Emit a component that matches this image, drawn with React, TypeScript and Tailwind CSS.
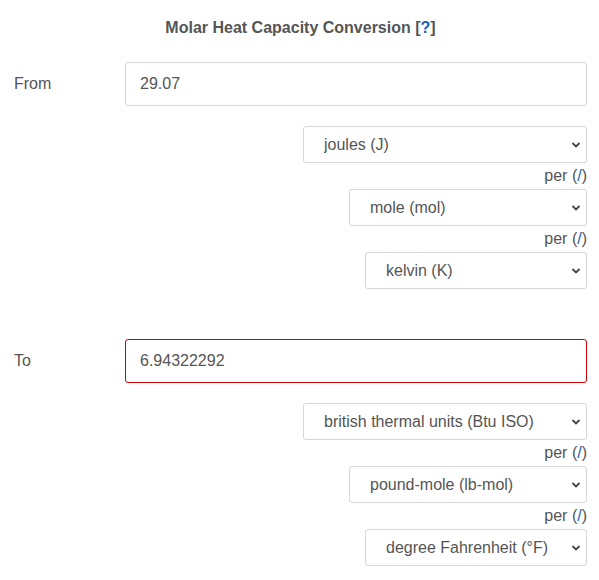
import { useState } from "react";

type UnitRow = { value: string; width: string };

function Chevron() {
  return (
    <svg
      width="10"
      height="6"
      viewBox="0 0 10 6"
      className="pointer-events-none absolute right-[6px] top-1/2 -translate-y-1/2"
    >
      <polyline
        points="1.5,1 5,4.5 8.5,1"
        fill="none"
        stroke="#444"
        strokeWidth="1.8"
      />
    </svg>
  );
}

function UnitSelect({ value, width }: UnitRow) {
  return (
    <div className={`relative ${width}`}>
      <select
        value={value}
        onChange={() => {}}
        className="h-[37px] w-full appearance-none rounded-[3px] border border-[#d6d6d6] bg-white pl-[20px] pr-[30px] text-[16px] text-[#555] outline-none"
      >
        <option value={value}>{value}</option>
      </select>
      <Chevron />
    </div>
  );
}

function Per() {
  return (
    <div className="h-[26px] leading-[26px] text-[16px] text-[#555]">
      per (<span className="text-[#1a5fb4]">/</span>)
    </div>
  );
}

function UnitStack({ units }: { units: UnitRow[] }) {
  return (
    <div className="flex flex-col items-end">
      {units.map((u, i) => (
        <div key={i} className="flex flex-col items-end">
          {i > 0 && <Per />}
          <UnitSelect value={u.value} width={u.width} />
        </div>
      ))}
    </div>
  );
}

export default function App() {
  const [from, setFrom] = useState("29.07");

  return (
    <div className="min-h-[580px] bg-white pl-[14px] pr-[12px] font-['Liberation_Sans',Arial,sans-serif] text-[16px] text-[#555]">
      <h2 className="pt-[19px] text-center text-[16px] font-bold leading-[18px] text-[#555]">
        Molar Heat Capacity Conversion [
        <span className="text-[#1a5fb4]">?</span>]
      </h2>

      <div className="mt-[25px] flex items-center">
        <label className="w-[111px]">From</label>
        <input
          value={from}
          onChange={(e) => setFrom(e.target.value)}
          className="h-[44px] flex-1 rounded-[3px] border border-[#d6d6d6] bg-white pl-[14px] text-[16px] text-[#555] outline-none"
        />
      </div>

      <div className="mt-[20px]">
        <UnitStack
          units={[
            { value: "joules (J)", width: "w-[284px]" },
            { value: "mole (mol)", width: "w-[238px]" },
            { value: "kelvin (K)", width: "w-[222px]" },
          ]}
        />
      </div>

      <div className="mt-[50px] flex items-center">
        <label className="w-[111px]">To</label>
        <input
          value="6.94322292"
          readOnly
          className="h-[44px] flex-1 rounded-[3px] border border-[#cc0000] bg-white pl-[14px] text-[16px] text-[#555] outline-none"
        />
      </div>

      <div className="mt-[20px]">
        <UnitStack
          units={[
            { value: "british thermal units (Btu ISO)", width: "w-[284px]" },
            { value: "pound-mole (lb-mol)", width: "w-[238px]" },
            { value: "degree Fahrenheit (°F)", width: "w-[222px]" },
          ]}
        />
      </div>
    </div>
  );
}
